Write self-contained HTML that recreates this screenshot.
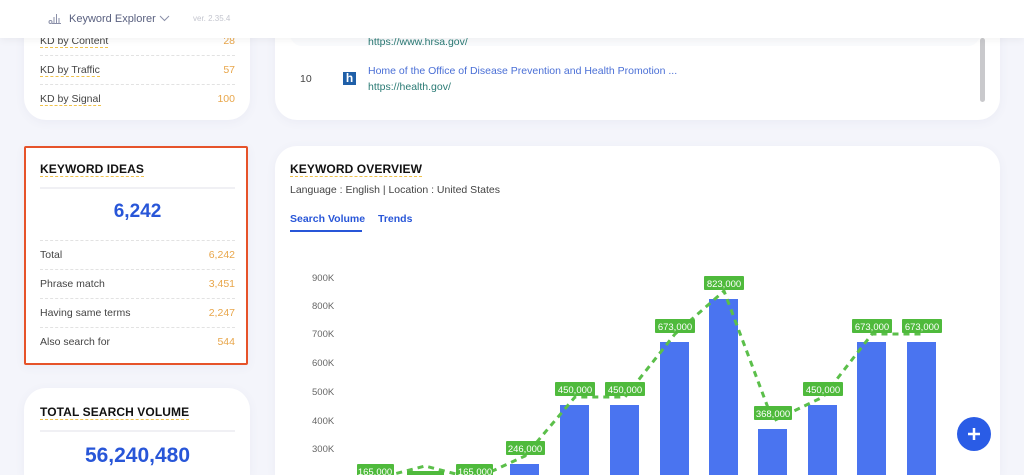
<!DOCTYPE html>
<html><head><meta charset="utf-8"><style>
*{margin:0;padding:0;box-sizing:border-box}
html,body{width:1024px;height:475px;overflow:hidden}
body{background:#f4f5fb;font-family:"Liberation Sans",sans-serif;position:relative;color:#333}
.a{position:absolute}
.card{position:absolute;background:#fff;border-radius:22px;box-shadow:0 2px 10px rgba(80,90,140,.06)}
.row{position:absolute;left:40px;width:195px;font-size:10.5px;color:#444;display:flex;justify-content:space-between}
.row span:last-child{color:#e8a64a}
.dl{position:absolute;left:40px;width:195px;border-top:1px dashed #e2e2e2}
.u{border-bottom:1px dashed #f0c24a}
h3{font-size:12px;font-weight:bold;color:#111;letter-spacing:.1px}
</style></head><body>
<div class="card" style="left:24px;top:10px;width:226px;height:110px"></div>
<div class="row" style="top:35px"><span class="u">KD by Content</span><span>28</span></div>
<div class="dl" style="top:55px"></div>
<div class="row" style="top:64px"><span class="u">KD by Traffic</span><span>57</span></div>
<div class="dl" style="top:84px"></div>
<div class="row" style="top:93px"><span class="u">KD by Signal</span><span>100</span></div>

<div class="card" style="left:275px;top:10px;width:725px;height:110px"></div>
<div class="a" style="left:290px;top:10px;width:690px;height:36px;background:#fafbfd;border-radius:0 0 12px 12px"></div>
<div class="a" style="left:343px;top:30px;width:12px;height:6px;background:#3b63b8"></div>
<div class="a" style="left:368px;top:36px;font-size:10.5px;color:#2a7a74">https://www.hrsa.gov/</div>
<div class="a" style="left:300px;top:73px;font-size:10.5px;color:#444">10</div>
<div class="a" style="left:343px;top:72px;width:13px;height:13px;background:#1f5fa8;color:#fff;font-weight:bold;font-size:12px;line-height:13px;text-align:center">h</div>
<div class="a" style="left:368px;top:65px;font-size:10.5px;color:#4a6fd6">Home of the Office of Disease Prevention and Health Promotion ...</div>
<div class="a" style="left:368px;top:81px;font-size:10.5px;color:#2a7a74">https://health.gov/</div>
<div class="a" style="left:980px;top:38px;width:5px;height:64px;background:#c9c9cc;border-radius:3px"></div>

<div class="a" style="left:0;top:0;width:1024px;height:38px;background:#fff;box-shadow:0 2px 8px rgba(0,0,0,.05)"></div>
<svg class="a" style="left:48px;top:11px" width="14" height="14" viewBox="0 0 14 14" fill="none" stroke="#8a8fa8" stroke-width="1"><circle cx="2.5" cy="11" r="1.5"/><path d="M4 12.5h9M6 12V6M8.5 12V3M11 12V7"/></svg>
<div class="a" style="left:69px;top:13px;font-size:11px;color:#5a6180">Keyword Explorer</div>
<svg class="a" style="left:159px;top:15px" width="11" height="7"><path d="M1 1l4.5 4.5L10 1" fill="none" stroke="#8a8fa8"/></svg>
<div class="a" style="left:193px;top:14px;font-size:8px;color:#c4c6cf">ver. 2.35.4</div>

<div class="card" style="left:24px;top:146px;width:224px;height:219px;border-radius:2px;border:2px solid #e6532a"></div>
<h3 class="a u" style="left:40px;top:162px">KEYWORD IDEAS</h3>
<div class="a" style="left:40px;top:187px;width:195px;border-top:2px solid #f0f0f4"></div>
<div class="a" style="left:40px;top:201px;width:195px;text-align:center;font-size:19px;font-weight:bold;color:#2856d8">6,242</div>
<div class="dl" style="top:240px"></div>
<div class="row" style="top:249px"><span>Total</span><span>6,242</span></div>
<div class="dl" style="top:269px"></div>
<div class="row" style="top:278px"><span>Phrase match</span><span>3,451</span></div>
<div class="dl" style="top:298px"></div>
<div class="row" style="top:307px"><span>Having same terms</span><span>2,247</span></div>
<div class="dl" style="top:327px"></div>
<div class="row" style="top:336px"><span>Also search for</span><span>544</span></div>

<div class="card" style="left:24px;top:388px;width:226px;height:87px;border-radius:22px 22px 0 0"></div>
<h3 class="a u" style="left:40px;top:405px">TOTAL SEARCH VOLUME</h3>
<div class="a" style="left:40px;top:430px;width:195px;border-top:2px solid #f0f0f4"></div>
<div class="a" style="left:40px;top:444px;width:195px;text-align:center;font-size:21px;font-weight:bold;color:#2856d8">56,240,480</div>

<div class="card" style="left:275px;top:146px;width:725px;height:329px;border-radius:22px 22px 0 0"></div>
<h3 class="a u" style="left:290px;top:162px">KEYWORD OVERVIEW</h3>
<div class="a" style="left:290px;top:184px;font-size:10.5px;color:#444">Language : English | Location : United States</div>
<div class="a" style="left:290px;top:213px;font-size:10.5px;font-weight:bold;color:#2856d8">Search Volume</div>
<div class="a" style="left:290px;top:230px;width:72px;height:2px;background:#2856d8"></div>
<div class="a" style="left:378px;top:213px;font-size:10.5px;font-weight:bold;color:#2856d8">Trends</div>

<svg class="a" style="left:0;top:0" width="1024" height="475" font-family="Liberation Sans, sans-serif">
<g font-size="9.5" fill="#666">
<text x="312" y="281">900K</text><text x="312" y="309">800K</text><text x="312" y="337">700K</text><text x="312" y="366">600K</text><text x="312" y="395">500K</text><text x="312" y="424">400K</text><text x="312" y="452">300K</text>
</g>
<g fill="#4a74f0">
<rect x="361" y="487" width="29" height="50"/><rect x="411" y="473" width="29" height="50"/><rect x="460" y="487" width="29" height="50"/>
<rect x="510" y="464" width="29" height="50"/><rect x="560" y="405" width="29" height="90"/><rect x="610" y="405" width="29" height="90"/>
<rect x="660" y="342" width="29" height="150"/><rect x="709" y="299" width="29" height="200"/><rect x="758" y="429" width="29" height="60"/>
<rect x="808" y="405" width="29" height="90"/><rect x="857" y="342" width="29" height="150"/><rect x="907" y="342" width="29" height="150"/>
</g>
<polyline points="375,479 425,466 475,479 525,456 575,397 625,397 675,334 724,291 773,421 823,397 872,334 921,334" fill="none" stroke="#5bbf4a" stroke-width="3" stroke-dasharray="6,5"/>
<g fill="#4fba3c">
<rect x="357" y="464" width="37" height="14" rx="1"/><rect x="407" y="471" width="37" height="6"/><rect x="456" y="464" width="37" height="14" rx="1"/>
<rect x="506" y="441" width="39" height="14" rx="1"/><rect x="555" y="382" width="40" height="14" rx="1"/><rect x="605" y="382" width="40" height="14" rx="1"/>
<rect x="655" y="319" width="40" height="14" rx="1"/><rect x="704" y="276" width="40" height="14" rx="1"/><rect x="754" y="406" width="38" height="14" rx="1"/>
<rect x="803" y="382" width="40" height="14" rx="1"/><rect x="852" y="319" width="40" height="14" rx="1"/><rect x="902" y="319" width="40" height="14" rx="1"/>
</g>
<g font-size="9.5" fill="#fff" text-anchor="middle">
<text x="375" y="475">165,000</text><text x="475" y="475">165,000</text><text x="525" y="452">246,000</text>
<text x="575" y="393">450,000</text><text x="625" y="393">450,000</text><text x="675" y="330">673,000</text>
<text x="724" y="287">823,000</text><text x="773" y="417">368,000</text><text x="823" y="393">450,000</text>
<text x="872" y="330">673,000</text><text x="922" y="330">673,000</text>
</g>
<circle cx="974" cy="434" r="21" fill="#fff" opacity=".8"/>
<circle cx="974" cy="434" r="17" fill="#2a5ce6"/>
<path d="M968 434h12M974 428v12" stroke="#fff" stroke-width="2.5"/>
</svg>
</body></html>
